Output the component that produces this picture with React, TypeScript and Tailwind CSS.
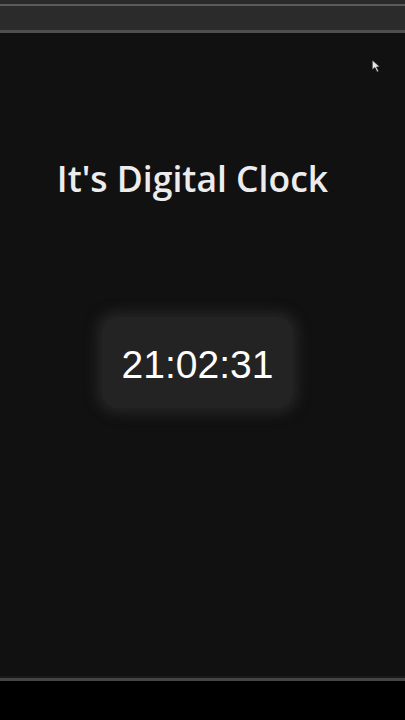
import { useEffect, useState } from "react";

const pad = (n: number) => String(n).padStart(2, "0");

export default function App() {
  // fixed start so the picture matches 21:02:31
  const [time] = useState({ h: 21, m: 2, s: 31 });

  useEffect(() => {}, []);

  return (
    <div className="h-[720px] w-[405px] flex flex-col bg-black overflow-hidden">
      {/* browser-ish top bar */}
      <div className="h-[4px] bg-[#2a2a2a]" />
      <div className="h-[2px] bg-[#5a5a5a]" />
      <div className="h-[24px] bg-[#2b2b2b]" />
      <div className="h-[3px] bg-[#4f4f4f]" />

      <main className="relative flex-1 bg-[#111111] flex flex-col items-center">
        <svg
          className="absolute left-[371px] top-[26px]"
          width="10"
          height="14"
          viewBox="0 0 9 13"
        >
          <path d="M1 1 L1 10 L3.5 8 L5.5 12 L7 11.3 L5 7.5 L8 7.3 Z" fill="#e5e5e5" stroke="#111" strokeWidth="0.6" />
        </svg>

        <h1
          className="mt-[120px] mr-[20px] text-[35.5px] leading-[50px] font-semibold text-[#ececec]"
          style={{ fontFamily: "'Open Sans', sans-serif" }}
        >
          It's Digital Clock
        </h1>

        <div className="mt-[114px] mr-[10px] rounded-[16px] bg-[#232323] px-[20px] pt-[25px] pb-[21px] shadow-[0_0_12px_6px_rgba(40,40,40,0.8)]">
          <span
            className="block text-[39px] leading-[45px] text-white"
            style={{ fontFamily: "'Liberation Sans', Arial, sans-serif" }}
          >
            {pad(time.h)}:{pad(time.m)}:{pad(time.s)}
          </span>
        </div>
      </main>

      <div className="h-[2px] bg-[#1a1a1a]" />
      <div className="h-[3px] bg-[#444444]" />
      <div className="h-[39px] bg-black" />
    </div>
  );
}
